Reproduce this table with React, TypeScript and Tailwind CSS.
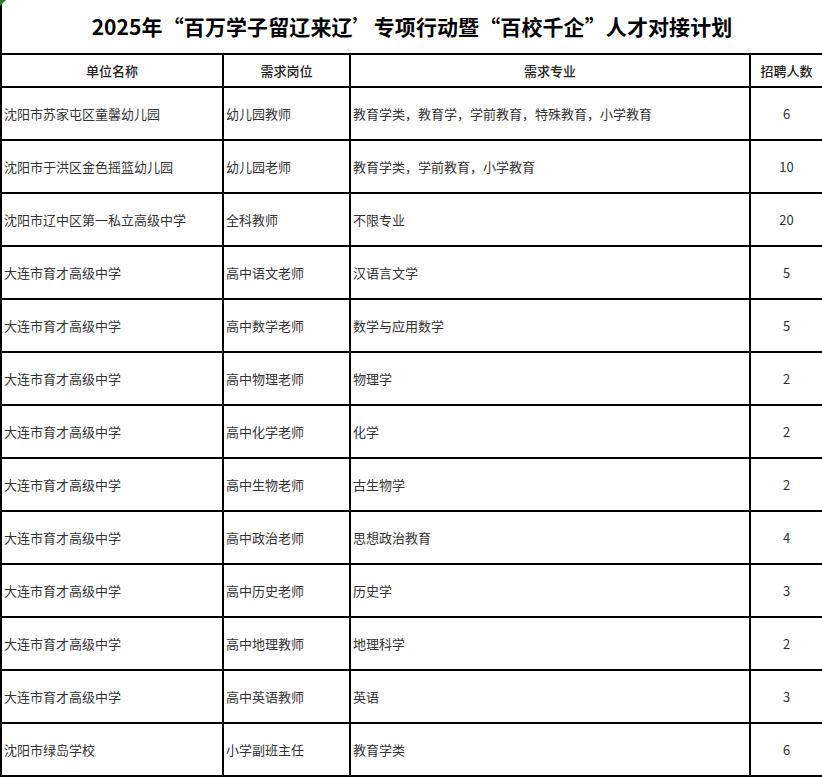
import React from 'react';

type Row = {
  unit: string;
  post: string;
  major: string;
  count: number;
};

const ROWS: Row[] = [
  { unit: '沈阳市苏家屯区童馨幼儿园', post: '幼儿园教师', major: '教育学类，教育学，学前教育，特殊教育，小学教育', count: 6 },
  { unit: '沈阳市于洪区金色摇篮幼儿园', post: '幼儿园老师', major: '教育学类，学前教育，小学教育', count: 10 },
  { unit: '沈阳市辽中区第一私立高级中学', post: '全科教师', major: '不限专业', count: 20 },
  { unit: '大连市育才高级中学', post: '高中语文老师', major: '汉语言文学', count: 5 },
  { unit: '大连市育才高级中学', post: '高中数学老师', major: '数学与应用数学', count: 5 },
  { unit: '大连市育才高级中学', post: '高中物理老师', major: '物理学', count: 2 },
  { unit: '大连市育才高级中学', post: '高中化学老师', major: '化学', count: 2 },
  { unit: '大连市育才高级中学', post: '高中生物老师', major: '古生物学', count: 2 },
  { unit: '大连市育才高级中学', post: '高中政治老师', major: '思想政治教育', count: 4 },
  { unit: '大连市育才高级中学', post: '高中历史老师', major: '历史学', count: 3 },
  { unit: '大连市育才高级中学', post: '高中地理教师', major: '地理科学', count: 2 },
  { unit: '大连市育才高级中学', post: '高中英语教师', major: '英语', count: 3 },
  { unit: '沈阳市绿岛学校', post: '小学副班主任', major: '教育学类', count: 6 },
];

const cell = 'border-2 border-black px-[2px] align-middle';

export default function App() {
  return (
    <div className="relative w-[822px] h-[777px] bg-white overflow-hidden font-['Noto_Sans_CJK_SC','Noto_Sans',sans-serif]">
      {/* excel comment marker */}
      <div className="absolute left-0 top-0 w-0 h-0 border-t-[6px] border-r-[6px] border-t-[#2e7d32] border-r-transparent" />
      <table className="w-[822px] table-fixed border-collapse">
        <colgroup>
          <col className="w-[222px]" />
          <col className="w-[127px]" />
          <col className="w-[400px]" />
          <col className="w-[73px]" />
        </colgroup>
        <thead>
          <tr className="h-[54px]">
            <th colSpan={4} className="border-2 border-t-0 border-black text-center text-[21px] font-bold text-black tracking-[0.1px]">
              2025年“百万学子留辽来辽’专项行动暨“百校千企”人才对接计划
            </th>
          </tr>
          <tr className="h-[33px]">
            {['单位名称', '需求岗位', '需求专业', '招聘人数'].map((h) => (
              <th key={h} className={`${cell} text-center text-[13px] font-medium text-[#222]`}>
                {h}
              </th>
            ))}
          </tr>
        </thead>
        <tbody>
          {ROWS.map((r, i) => (
            <tr key={i} className="h-[53px] text-[13px] text-[#333]">
              <td className={`${cell} text-left`}>{r.unit}</td>
              <td className={`${cell} text-left`}>{r.post}</td>
              <td className={`${cell} text-left`}>{r.major}</td>
              <td className={`${cell} text-center`}>{r.count}</td>
            </tr>
          ))}
        </tbody>
      </table>
    </div>
  );
}
